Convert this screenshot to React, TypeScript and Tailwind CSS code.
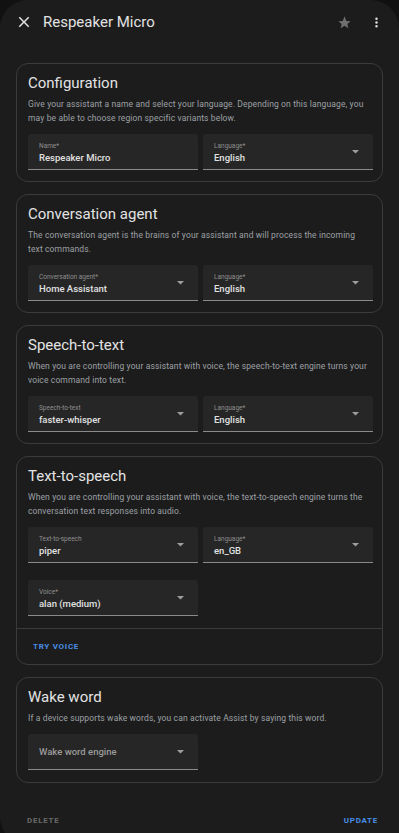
import React from "react";

const Arrow = () => (
  <svg width="7" height="4" viewBox="0 0 7 4" className="shrink-0">
    <polygon points="0,0 7,0 3.5,3.6" fill="#9e9e9e" />
  </svg>
);

type FieldProps = { label?: string; value?: string; placeholder?: string; select?: boolean };

const Field = ({ label, value, placeholder, select = true }: FieldProps) => (
  <div className="h-[36px] bg-[#262626] rounded-t-[3px] border-b border-[#8a8a8a] pl-[11px] pr-[14px] flex items-center">
    <div className="flex-1 min-w-0 h-full flex flex-col">
      {placeholder ? (
        <div className="h-full flex items-center text-[9.5px] font-medium text-[#9a9a9a] leading-[12px]">{placeholder}</div>
      ) : (
        <>
          <div className="mt-[8px] text-[6.5px] leading-[8px] text-[#8f8f8f]">{label}</div>
          <div className="mt-[2px] text-[9.5px] leading-[12px] font-medium text-[#e1e1e1] whitespace-nowrap">{value}</div>
        </>
      )}
    </div>
    {select && <Arrow />}
  </div>
);

const Card = ({ title, lines, children }: { title: string; lines: string[]; children: React.ReactNode }) => (
  <div className="border border-[#3b3b3b] rounded-[12px]">
    <div className="pt-[9px] px-[11px]">
      <div className="text-[15px] leading-[20px] text-[#e3e3e3]">{title}</div>
      <div className="mt-[4px] text-[8.5px] leading-[14px] text-[#9da0a5] tracking-[0.015em]">
        {lines.map((l, i) => (
          <div key={i} className="whitespace-nowrap">{l}</div>
        ))}
      </div>
    </div>
    {children}
  </div>
);

export default function App() {
  return (
    <div className="w-[399px] h-[833px] bg-[#111111] overflow-hidden" style={{ fontFamily: "Roboto, 'Noto Sans', sans-serif" }}>
      <div className="h-[845px] bg-[#1c1c1c] rounded-[28px] rounded-br-none flex flex-col">
        <div className="h-[44px] flex items-center pl-[15px] pr-[15px]">
          <svg width="18" height="18" viewBox="0 0 24 24" className="shrink-0">
            <path fill="#e1e1e1" d="M19,6.41L17.59,5L12,10.59L6.41,5L5,6.41L10.59,12L5,17.59L6.41,19L12,13.41L17.59,19L19,17.59L13.41,12L19,6.41Z" />
          </svg>
          <div className="ml-[10px] flex-1 text-[15px] leading-[20px] text-[#e3e3e3]">Respeaker Micro</div>
          <svg width="15" height="15" viewBox="0 0 24 24" className="shrink-0">
            <path fill="#6f6f6f" d="M12,17.27L18.18,21L16.54,14.36L21.75,9.84L14.96,9.5L12,2L9.27,9.5L2.25,9.84L7.46,14.36L5.82,21L12,17.27Z" />
          </svg>
          <svg width="15" height="15" viewBox="0 0 24 24" className="shrink-0 ml-[17px]">
            <path fill="#e1e1e1" d="M12,16A2,2 0 0,1 14,18A2,2 0 0,1 12,20A2,2 0 0,1 10,18A2,2 0 0,1 12,16M12,10A2,2 0 0,1 14,12A2,2 0 0,1 12,14A2,2 0 0,1 10,12A2,2 0 0,1 12,10M12,4A2,2 0 0,1 14,6A2,2 0 0,1 12,8A2,2 0 0,1 10,6A2,2 0 0,1 12,4Z" />
          </svg>
        </div>

        <div className="pt-[19px] px-[16px] flex flex-col gap-[12px]">
          <Card
            title="Configuration"
            lines={[
              "Give your assistant a name and select your language. Depending on this language, you",
              "may be able to choose region specific variants below.",
            ]}
          >
            <div className="mt-[9px] pl-[11px] pr-[9px] pb-[11px] grid grid-cols-2 gap-[5px]">
              <Field label="Name*" value="Respeaker Micro" select={false} />
              <Field label="Language*" value="English" />
            </div>
          </Card>

          <Card
            title="Conversation agent"
            lines={[
              "The conversation agent is the brains of your assistant and will process the incoming",
              "text commands.",
            ]}
          >
            <div className="mt-[9px] pl-[11px] pr-[9px] pb-[11px] grid grid-cols-2 gap-[5px]">
              <Field label="Conversation agent*" value="Home Assistant" />
              <Field label="Language*" value="English" />
            </div>
          </Card>

          <Card
            title="Speech-to-text"
            lines={[
              "When you are controlling your assistant with voice, the speech-to-text engine turns your",
              "voice command into text.",
            ]}
          >
            <div className="mt-[9px] pl-[11px] pr-[9px] pb-[11px] grid grid-cols-2 gap-[5px]">
              <Field label="Speech-to-text" value="faster-whisper" />
              <Field label="Language*" value="English" />
            </div>
          </Card>

          <Card
            title="Text-to-speech"
            lines={[
              "When you are controlling your assistant with voice, the text-to-speech engine turns the",
              "conversation text responses into audio.",
            ]}
          >
            <div className="mt-[9px] pl-[11px] pr-[9px] pb-[12px] grid grid-cols-2 gap-x-[5px] gap-y-[17px]">
              <Field label="Text-to-speech" value="piper" />
              <Field label="Language*" value="en_GB" />
              <Field label="Voice*" value="alan (medium)" />
            </div>
            <div className="border-t border-[#3b3b3b] h-[36px] flex items-center pl-[16px]">
              <span className="text-[8px] font-bold tracking-[0.09em] text-[#4a8fe7]">TRY VOICE</span>
            </div>
          </Card>

          <Card
            title="Wake word"
            lines={["If a device supports wake words, you can activate Assist by saying this word."]}
          >
            <div className="mt-[9px] pl-[11px] pr-[9px] pb-[12px] grid grid-cols-2 gap-[5px]">
              <Field placeholder="Wake word engine" />
            </div>
          </Card>
        </div>

        <div className="mt-[32px] flex items-center justify-between pl-[27px] pr-[21px] h-[12px]">
          <span className="text-[8px] font-bold tracking-[0.09em] text-[#6a6a6a]">DELETE</span>
          <span className="text-[8px] font-bold tracking-[0.09em] text-[#4a8fe7]">UPDATE</span>
        </div>
      </div>
    </div>
  );
}
